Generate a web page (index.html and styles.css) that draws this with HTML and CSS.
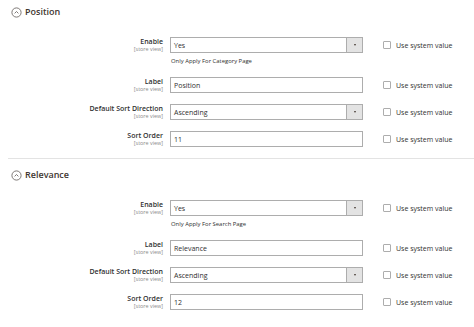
FILE: index.html
```html
<!DOCTYPE html>
<html>
<head>
<meta charset="utf-8">
<link rel="stylesheet" href="styles.css">
</head>
<body>
<div class="page">
  <section class="block">
    <div class="block-title">
      <svg class="toggle" width="11" height="11" viewBox="0 0 11 11"><circle cx="5.5" cy="5.5" r="4.6" fill="none" stroke="#6f6a66" stroke-width="0.9"/><path d="M3.6 6.4 L5.5 4.5 L7.4 6.4" fill="none" stroke="#6f6a66" stroke-width="0.9"/></svg>
      <span class="title-text">Position</span>
    </div>
    <div class="fields">
      <div class="row">
        <div class="label"><span class="name">Enable</span><span class="scope">[store view]</span></div>
        <div class="control">
          <div class="select"><span class="value">Yes</span><span class="arrow"><span class="tri"></span></span></div>
          <div class="hint">Only Apply For Category Page</div>
        </div>
        <div class="sys"><span class="check"></span><span>Use system value</span></div>
      </div>
      <div class="row">
        <div class="label"><span class="name">Label</span><span class="scope">[store view]</span></div>
        <div class="control"><div class="input">Position</div></div>
        <div class="sys"><span class="check"></span><span>Use system value</span></div>
      </div>
      <div class="row">
        <div class="label"><span class="name">Default Sort Direction</span><span class="scope">[store view]</span></div>
        <div class="control">
          <div class="select"><span class="value">Ascending</span><span class="arrow"><span class="tri"></span></span></div>
        </div>
        <div class="sys"><span class="check"></span><span>Use system value</span></div>
      </div>
      <div class="row">
        <div class="label"><span class="name">Sort Order</span><span class="scope">[store view]</span></div>
        <div class="control"><div class="input">11</div></div>
        <div class="sys"><span class="check"></span><span>Use system value</span></div>
      </div>
    </div>
  </section>
  <div class="divider"></div>
  <section class="block second">
    <div class="block-title">
      <svg class="toggle" width="11" height="11" viewBox="0 0 11 11"><circle cx="5.5" cy="5.5" r="4.6" fill="none" stroke="#6f6a66" stroke-width="0.9"/><path d="M3.6 6.4 L5.5 4.5 L7.4 6.4" fill="none" stroke="#6f6a66" stroke-width="0.9"/></svg>
      <span class="title-text">Relevance</span>
    </div>
    <div class="fields">
      <div class="row">
        <div class="label"><span class="name">Enable</span><span class="scope">[store view]</span></div>
        <div class="control">
          <div class="select"><span class="value">Yes</span><span class="arrow"><span class="tri"></span></span></div>
          <div class="hint">Only Apply For Search Page</div>
        </div>
        <div class="sys"><span class="check"></span><span>Use system value</span></div>
      </div>
      <div class="row">
        <div class="label"><span class="name">Label</span><span class="scope">[store view]</span></div>
        <div class="control"><div class="input">Relevance</div></div>
        <div class="sys"><span class="check"></span><span>Use system value</span></div>
      </div>
      <div class="row">
        <div class="label"><span class="name">Default Sort Direction</span><span class="scope">[store view]</span></div>
        <div class="control">
          <div class="select"><span class="value">Ascending</span><span class="arrow"><span class="tri"></span></span></div>
        </div>
        <div class="sys"><span class="check"></span><span>Use system value</span></div>
      </div>
      <div class="row">
        <div class="label"><span class="name">Sort Order</span><span class="scope">[store view]</span></div>
        <div class="control"><div class="input">12</div></div>
        <div class="sys"><span class="check"></span><span>Use system value</span></div>
      </div>
    </div>
  </section>
</div>
</body>
</html>
```
FILE: styles.css
```css
html, body {
  margin: 0;
  padding: 0;
  background: #ffffff;
}
body {
  font-family: "Open Sans", "DejaVu Sans", sans-serif;
  color: #303030;
  width: 474px;
  height: 327px;
  overflow: hidden;
}
.block-title {
  height: 24px;
  display: flex;
  align-items: center;
  padding-left: 11px;
  gap: 3px;
}
.toggle {
  display: block;
}
.title-text {
  font-size: 9px;
  font-weight: 600;
  color: #41362f;
  line-height: 12px;
}
.fields {
  padding-top: 13px;
  display: flex;
  flex-direction: column;
  gap: 11px;
}
.row {
  display: grid;
  grid-template-columns: 163px 193px auto;
  column-gap: 7px;
  align-items: start;
}
.label {
  display: flex;
  flex-direction: column;
  align-items: flex-end;
  text-align: right;
}
.name {
  font-size: 7px;
  font-weight: 600;
  line-height: 9px;
  color: #303030;
  white-space: nowrap;
}
.scope {
  font-size: 5.4px;
  line-height: 6px;
  color: #8a8a8a;
  white-space: nowrap;
}
.control {
  display: flex;
  flex-direction: column;
}
.select, .input {
  box-sizing: border-box;
  height: 16px;
  border: 1px solid #adadad;
  background: #fff;
  font-size: 7px;
  color: #303030;
  display: flex;
  align-items: center;
}
.input {
  padding-left: 3px;
}
.select .value {
  flex: 1;
  padding-left: 3px;
}
.arrow {
  width: 15px;
  height: 100%;
  background: #e3e3e3;
  border-left: 1px solid #adadad;
  display: flex;
  align-items: center;
  justify-content: center;
}
.tri {
  width: 0;
  height: 0;
  border-left: 1.6px solid transparent;
  border-right: 1.6px solid transparent;
  border-top: 2px solid #41362f;
}
.hint {
  font-size: 5.9px;
  line-height: 10px;
  margin-top: 3px;
  padding-left: 1px;
  color: #303030;
}
.sys {
  display: flex;
  align-items: center;
  height: 16px;
  margin-left: 13px;
  gap: 5px;
  font-size: 7px;
  color: #303030;
  white-space: nowrap;
}
.check {
  box-sizing: border-box;
  width: 8px;
  height: 8px;
  border: 1px solid #adadad;
  border-radius: 1px;
  background: #fff;
}
.divider {
  margin: 11px 0 4px 8px;
  height: 1px;
  background: #e3e3e3;
}
```
